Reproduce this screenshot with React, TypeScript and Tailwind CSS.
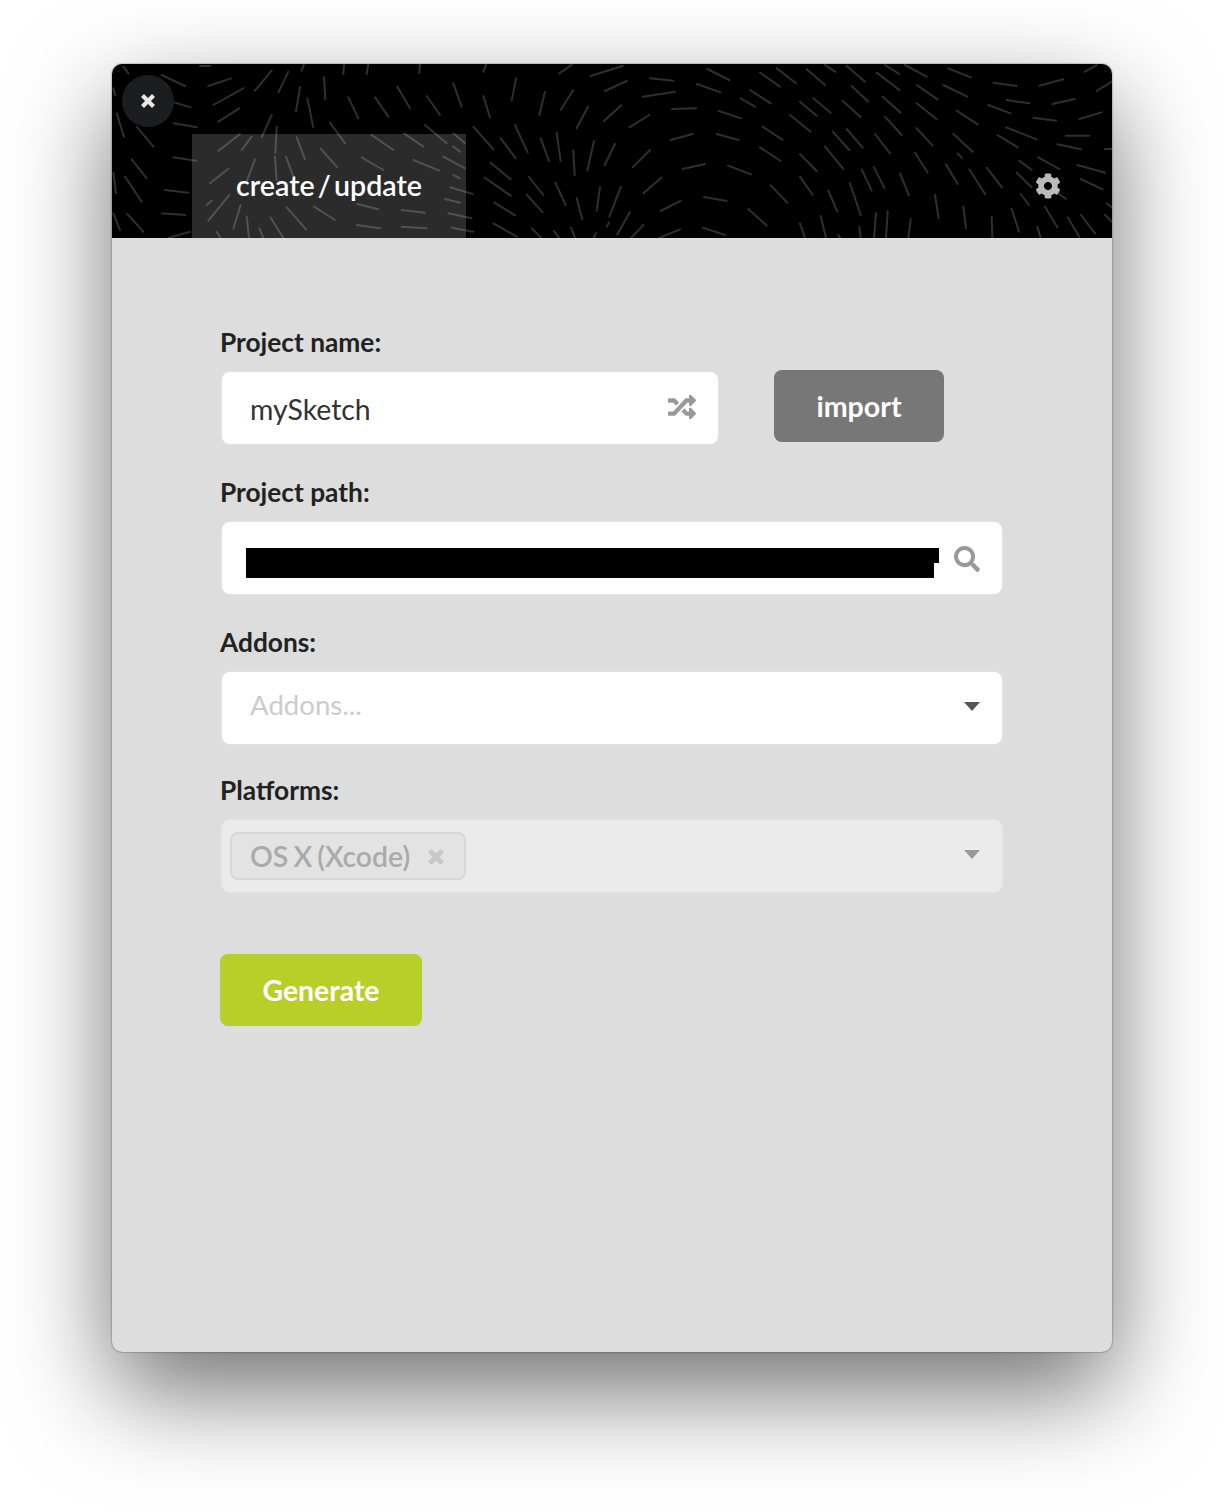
import { ReactNode } from "react";
import { FaCog, FaRandom, FaSearch } from "react-icons/fa";

// dashes of the header texture, read off in three overlapping 3x crops
type Dash = number[];

const leftDashes: Dash[] = [
  [70, 50, 85, 70], [300, 48, 330, 48], [185, 75, 255, 108], [325, 108, 393, 85], [465, 122, 515, 62],
  [535, 128, 565, 65], [605, 62, 612, 42], [672, 82, 676, 148], [730, 72, 732, 42], [800, 72, 805, 42],
  [958, 68, 960, 42], [40, 115, 45, 135], [222, 157, 272, 172], [340, 165, 430, 115], [588, 185, 600, 112],
  [745, 142, 775, 205], [825, 142, 865, 200], [892, 110, 930, 175], [980, 138, 1020, 195], [1060, 100, 1085, 170],
  [355, 215, 418, 175], [622, 145, 640, 232], [50, 190, 72, 260], [222, 220, 290, 232], [110, 230, 160, 290],
  [485, 262, 515, 195], [530, 230, 526, 310], [690, 218, 735, 280], [975, 225, 1040, 280], [355, 303, 420, 252],
  [425, 300, 455, 260], [590, 262, 615, 328], [662, 296, 712, 352], [815, 255, 880, 300], [912, 250, 970, 290],
  [1060, 250, 1095, 280], [1060, 290, 1080, 305], [1030, 320, 1095, 355], [220, 322, 288, 332], [95, 328, 140, 385],
  [330, 400, 385, 356], [440, 395, 465, 328], [525, 320, 530, 390], [558, 320, 580, 380], [785, 322, 850, 360],
  [940, 330, 1018, 362], [1060, 375, 1080, 385], [40, 368, 48, 430], [75, 380, 125, 455], [195, 420, 265, 428],
  [1050, 412, 1118, 432], [1035, 447, 1080, 458], [320, 465, 335, 452], [325, 512, 388, 435], [400, 535, 422, 465],
  [560, 472, 618, 538], [642, 470, 705, 510], [772, 462, 835, 478], [905, 480, 975, 488], [1045, 490, 1115, 505],
  [185, 490, 255, 495], [82, 492, 130, 545], [40, 490, 60, 540], [440, 500, 447, 564], [512, 503, 550, 564],
  [770, 525, 840, 535], [905, 530, 980, 535], [1055, 533, 1120, 545], [478, 535, 490, 564], [350, 545, 362, 564],
  [205, 564, 270, 545],
];

const middleDashes: Dash[] = [
  [70, 35, 78, 15], [298, 40, 335, 15], [392, 48, 488, 18], [570, 55, 640, 62], [742, 27, 808, 60],
  [900, 38, 960, 80], [950, 25, 1008, 70], [155, 122, 168, 55], [435, 93, 500, 63], [710, 72, 782, 97],
  [548, 110, 645, 95], [870, 90, 932, 130], [842, 115, 885, 140], [90, 172, 70, 108], [238, 165, 255, 95],
  [302, 150, 340, 90], [350, 205, 384, 140], [432, 183, 484, 136], [508, 202, 568, 165], [636, 147, 708, 145],
  [776, 153, 843, 175], [990, 165, 1052, 215], [908, 200, 968, 240], [40, 200, 100, 268], [165, 195, 203, 277],
  [122, 235, 167, 295], [242, 235, 267, 303], [290, 218, 302, 303], [340, 272, 344, 346], [382, 332, 402, 243],
  [434, 315, 465, 252], [518, 322, 570, 270], [632, 240, 698, 222], [770, 222, 836, 240], [900, 262, 962, 303],
  [92, 308, 152, 358], [74, 353, 152, 407], [206, 350, 250, 405], [286, 368, 317, 435], [200, 404, 248, 457],
  [350, 415, 367, 478], [410, 452, 420, 382], [448, 470, 483, 380], [550, 400, 604, 353], [668, 327, 735, 312],
  [804, 317, 873, 343], [932, 376, 982, 428], [103, 428, 165, 466], [472, 523, 510, 456], [602, 453, 663, 422],
  [732, 411, 800, 423], [865, 447, 920, 497], [100, 490, 170, 530], [216, 506, 245, 535], [282, 513, 298, 535],
  [333, 503, 346, 535], [400, 535, 408, 520], [440, 500, 447, 488], [512, 535, 550, 495], [595, 535, 660, 508],
  [728, 503, 795, 525],
];

const rightDashes: Dash[] = [
  [20, 58, 75, 105], [75, 45, 105, 65], [140, 48, 195, 95], [230, 68, 298, 120], [255, 45, 298, 72],
  [315, 45, 380, 80], [445, 55, 512, 82], [855, 65, 890, 45], [580, 98, 650, 108], [718, 107, 790, 88],
  [890, 123, 935, 95], [155, 108, 205, 155], [350, 105, 412, 148], [430, 105, 502, 140], [40, 145, 92, 188],
  [0, 155, 50, 197], [128, 152, 182, 202], [248, 140, 302, 188], [620, 150, 688, 160], [758, 162, 825, 147],
  [565, 165, 632, 190], [350, 160, 410, 208], [470, 182, 533, 223], [700, 203, 768, 212], [838, 207, 905, 187],
  [255, 200, 305, 255], [618, 232, 710, 268], [98, 245, 148, 300], [140, 237, 188, 293], [225, 252, 270, 310],
  [350, 235, 398, 287], [460, 252, 518, 305], [797, 257, 868, 257], [592, 255, 653, 292], [772, 283, 843, 298],
  [915, 298, 935, 296], [75, 290, 130, 357], [0, 312, 50, 363], [472, 310, 486, 323], [345, 308, 383, 368],
  [715, 322, 778, 357], [658, 332, 695, 360], [832, 345, 915, 368], [185, 358, 215, 422], [222, 352, 254, 415],
  [300, 370, 327, 437], [437, 342, 473, 402], [508, 358, 555, 432], [560, 353, 606, 412], [650, 368, 695, 412],
  [842, 387, 908, 418], [775, 430, 798, 447], [0, 380, 38, 435], [85, 422, 112, 485], [150, 400, 182, 495],
  [405, 435, 416, 505], [662, 432, 687, 465], [920, 460, 935, 472], [490, 470, 498, 535], [635, 477, 657, 545],
  [735, 470, 772, 532], [803, 502, 838, 560], [843, 495, 885, 550], [915, 495, 935, 515], [62, 498, 78, 564],
  [0, 520, 15, 564], [228, 490, 222, 564], [263, 484, 258, 564], [332, 507, 325, 564], [178, 530, 182, 564],
  [575, 500, 577, 564], [712, 530, 722, 564], [115, 555, 120, 564],
];

function HeaderTexture() {
  const groups: { origin: [number, number]; dashes: Dash[] }[] = [
    { origin: [100, 50], dashes: leftDashes },
    { origin: [460, 60], dashes: middleDashes },
    { origin: [800, 50], dashes: rightDashes },
  ];

  return (
    <svg className="absolute inset-0 w-full h-full" viewBox="112 64 1000 174">
      {groups.map(({ origin, dashes }) => (
        <g
          key={origin[0]}
          transform={`translate(${origin[0]} ${origin[1]}) scale(${1 / 3})`}
          stroke="#2f2f2f"
          strokeWidth={6}
          strokeLinecap="round"
        >
          {dashes.map((d, i) => (
            <line key={i} x1={d[0]} y1={d[1]} x2={d[2]} y2={d[3]} />
          ))}
        </g>
      ))}
    </svg>
  );
}

function Cross({ className }: { className: string }) {
  return (
    <svg className={className} viewBox="0 0 14 14" stroke="currentColor" strokeWidth={4.2}>
      <path d="M1.5 1.5 12.5 12.5M12.5 1.5 1.5 12.5" />
    </svg>
  );
}

function Caret({ className }: { className: string }) {
  return <div className={`w-0 h-0 border-x-[8px] border-x-transparent border-t-[9px] ${className}`} />;
}

function Field({ label, className, children }: { label: string; className: string; children: ReactNode }) {
  return (
    <div className={className}>
      <div className="h-[36px] mb-[8px] text-[26.3px] leading-[32px] font-bold text-[#222]">{label}</div>
      {children}
    </div>
  );
}

function Box({ className, children }: { className: string; children: ReactNode }) {
  return (
    <div className={`h-[76px] flex items-center justify-between border-2 border-[#e0e0e0] rounded-[10px] ${className}`}>
      {children}
    </div>
  );
}

export default function App() {
  return (
    <div className="bg-white pt-[64px] pb-[160px] pl-[112px] font-[Lato,sans-serif]">
      <div className="w-[1000px] h-[1288px] rounded-[10px] overflow-hidden bg-[#dddddd] shadow-[0_40px_100px_rgba(0,0,0,0.56),0_0_2px_rgba(0,0,0,0.6)]">
        <div className="relative h-[174px] bg-black flex items-end justify-between pl-[80px] pr-[51px]">
          <HeaderTexture />
          <div className="absolute left-[10px] top-[11px] w-[52px] h-[52px] rounded-full bg-[#1c1d1f] flex items-center justify-center">
            <Cross className="w-[14px] h-[14px] text-[#e8e8e8] mr-[1px]" />
          </div>
          <div className="relative w-[274px] h-[104px] pl-[44px] pb-[2px] bg-white/17 flex items-center text-[28.6px] [word-spacing:-4px] font-semibold text-white">
            create / update
          </div>
          <FaCog className="relative mb-[39px] text-[#bbbbbb] text-[26px]" />
        </div>

        <div className="pt-[88px] pl-[108px]">
          <Field label="Project name:" className="mb-[30px]">
            <div className="flex items-start">
              <Box className="w-[500px] bg-white pl-[28px] pr-[22px]">
                <span className="text-[28.4px] text-[#333] mt-[2px]">mySketch</span>
                <FaRandom className="text-[#999] text-[28px] mb-[2px]" />
              </Box>
              <div className="w-[170px] h-[72px] ml-[54px] rounded-[8px] bg-[#777] flex items-center justify-center text-[28.6px] font-bold text-white">
                import
              </div>
            </div>
          </Field>

          <Field label="Project path:" className="mb-[30px]">
            <Box className="w-[784px] bg-white pl-[24px] pr-[22px]">
              <div className="flex flex-col mt-[10px]">
                <div className="w-[693px] h-[15px] bg-black" />
                <div className="w-[688px] h-[15px] bg-black" />
              </div>
              <FaSearch className="text-[#999] text-[26px] mt-[2px]" />
            </Box>
          </Field>

          <Field label="Addons:" className="mb-[28px]">
            <Box className="w-[784px] bg-white pl-[28px] pr-[22px]">
              <span className="text-[27.6px] text-[#cccccc] mb-[6px]">Addons...</span>
              <Caret className="border-t-[#555] mb-[4px]" />
            </Box>
          </Field>

          <Field label="Platforms:" className="mb-[60px]">
            <Box className="w-[784px] bg-[#ebebeb] pl-[8px] pr-[22px]">
              <div className="w-[236px] h-[48px] pl-[18px] pr-[20px] flex items-center justify-between rounded-[8px] border-2 border-[#d6d6d6] bg-[#e3e3e3] text-[28.4px] [word-spacing:-2px] font-semibold text-[#aaaaaa]">
                <span>OS X (Xcode)</span>
                <Cross className="w-[16px] h-[16px] text-[#c8c8c8] mt-[2px]" />
              </div>
              <Caret className="border-t-[#999] mb-[4px]" />
            </Box>
          </Field>

          <div className="w-[202px] h-[72px] rounded-[8px] bg-[#b7cf28] flex items-center justify-center text-[28.4px] font-bold text-white">
            Generate
          </div>
        </div>
      </div>
    </div>
  );
}
